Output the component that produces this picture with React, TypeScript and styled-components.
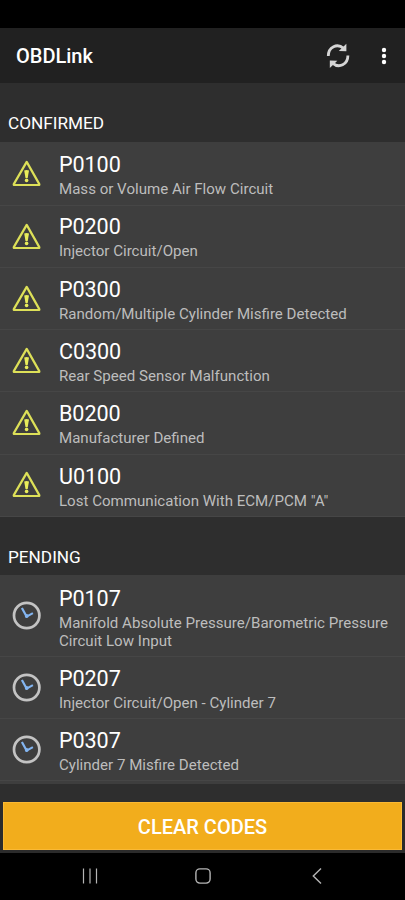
import React from "react";
import styled, { createGlobalStyle } from "styled-components";

const GlobalStyle = createGlobalStyle`
  * { box-sizing: border-box; }
  body { margin: 0; background: #000; font-family: Roboto, sans-serif; }
`;

const Screen = styled.div`
  width: 405px;
  height: 900px;
  padding-top: 28px;
  display: flex;
  flex-direction: column;
  background: #000;
  color: #fff;
  overflow: hidden;
`;

const AppBar = styled.header`
  flex: none;
  height: 55px;
  padding: 0 6px 0 16px;
  display: flex;
  align-items: center;
  background: #212121;
`;

const AppTitle = styled.h1`
  margin: 0;
  flex: 1;
  font-size: 20px;
  line-height: 24px;
  font-weight: 500;
  padding-top: 1px;
`;

const IconButton = styled.button<{ $width: number }>`
  width: ${(p) => p.$width}px;
  height: 40px;
  padding: 0;
  border: 0;
  background: none;
  display: grid;
  place-items: center;
`;

const Content = styled.main`
  flex: none;
  height: 719px;
  background: #2e2e2e;
`;

const SectionHeader = styled.h2<{ $height: number; $bottom: number }>`
  margin: 0;
  height: ${(p) => p.$height}px;
  padding: 0 8px ${(p) => p.$bottom}px;
  display: flex;
  align-items: flex-end;
  font-size: 17.2px;
  line-height: 21px;
  font-weight: 400;
`;

const CodeList = styled.ul<{ $height: number }>`
  list-style: none;
  margin: 0;
  padding: 0;
  height: ${(p) => p.$height}px;
  background: #3e3e3e;
`;

const CodeRow = styled.li<{ $height: number }>`
  height: ${(p) => p.$height}px;
  padding: 0 12px;
  display: flex;
  align-items: center;
  border-bottom: 1px solid #464646;
`;

const IconSlot = styled.span`
  width: 29px;
  height: 30px;
  margin-right: 18px;
  flex: none;
`;

const RowText = styled.div<{ $inset: number }>`
  flex: 1;
  padding-top: ${(p) => p.$inset}px;
  white-space: pre-line;
`;

const Code = styled.div`
  font-size: 21.6px;
  line-height: 26px;
  letter-spacing: -0.1px;
`;

const Description = styled.div`
  font-size: 15.08px;
  line-height: 18px;
  color: #bdbdbd;
  padding-top: 2px;
`;

const Footer = styled.div`
  flex: none;
  height: 51px;
  padding: 0 3px 3px;
  background: #2b2b2b;
`;

const ClearButton = styled.button`
  display: block;
  width: 100%;
  height: 48px;
  padding: 2px 0 0;
  border: 1px solid #fbb934;
  background: #f2ad1c;
  color: #fff;
  font: 500 20px/24px Roboto, sans-serif;
`;

const NavBar = styled.nav`
  flex: 1;
  display: grid;
  grid-template-columns: 113px 1fr 113px;
  padding: 0 32px 2px 33px;
  align-items: center;
  justify-items: center;
`;

const WarningIcon = () => (
  <svg width="29" height="30" viewBox="0 0 29 30" fill="none">
    <path d="M14.7 2.9 27.3 25.1Q27.6 26 26.7 26H2.4Q1.5 26 1.8 25.1Z" stroke="#dde058" strokeWidth="2.2" strokeLinejoin="round" />
    <path d="M12.2 11.6Q14.6 10.2 17 11.6L15.7 19H13.5Z" fill="#e8ec5a" />
    <circle cx="14.6" cy="21.4" r="1.8" fill="#e8ec5a" />
  </svg>
);

const ClockIcon = () => (
  <svg width="29" height="30" viewBox="0 0 29 30" fill="none">
    <circle cx="14.7" cy="15.5" r="12.7" stroke="#c3c3c3" strokeWidth="2.7" />
    <path d="m9.9 8 4.7 8.6 6.3-3.5" stroke="#83b5f1" strokeWidth="2.2" />
    <circle cx="14.7" cy="16" r="1.9" fill="#83b5f1" />
  </svg>
);

const RefreshIcon = () => (
  <svg width="24" height="26" viewBox="0 0 24 26" fill="none">
    <path d="M2.3 13C2.3 4 11.2-.3 17.6 5.4" stroke="#d5d5d5" strokeWidth="2.8" />
    <path d="M20.4.8V8.3L12.8 8Z" fill="#d5d5d5" />
    <path d="M21.9 12.5c0 9-8.9 13.3-15.3 7.6" stroke="#d5d5d5" strokeWidth="2.8" />
    <path d="M3.8 24.9V17.4L11.4 17.7Z" fill="#d5d5d5" />
  </svg>
);

const MoreIcon = () => (
  <svg width="6" height="18" viewBox="0 0 6 18" fill="#fff">
    <circle cx="3" cy="3" r="2.2" />
    <circle cx="3" cy="9" r="2.2" />
    <circle cx="3" cy="15" r="2.2" />
  </svg>
);

type Trouble = { code: string; text: string; height: number; inset?: number };

const confirmed: Trouble[] = [
  { code: "P0100", text: "Mass or Volume Air Flow Circuit", height: 64 },
  { code: "P0200", text: "Injector Circuit/Open", height: 62, inset: 1 },
  { code: "P0300", text: "Random/Multiple Cylinder Misfire Detected", height: 62 },
  { code: "C0300", text: "Rear Speed Sensor Malfunction", height: 62.3 },
  { code: "B0200", text: "Manufacturer Defined", height: 62.3 },
  { code: "U0100", text: 'Lost Communication With ECM/PCM "A"', height: 62.4, inset: 3 },
];

const pending: Trouble[] = [
  { code: "P0107", text: "Manifold Absolute Pressure/Barometric Pressure\nCircuit Low Input", height: 81.5, inset: 5 },
  { code: "P0207", text: "Injector Circuit/Open - Cylinder 7", height: 62.3, inset: 3 },
  { code: "P0307", text: "Cylinder 7 Misfire Detected", height: 62.3, inset: 3 },
];

const Codes = ({ items, height, icon }: { items: Trouble[]; height: number; icon: React.ReactNode }) => (
  <CodeList $height={height}>
    {items.map((item) => (
      <CodeRow key={item.code} $height={item.height}>
        <IconSlot>{icon}</IconSlot>
        <RowText $inset={item.inset ?? 2}>
          <Code>{item.code}</Code>
          <Description>{item.text}</Description>
        </RowText>
      </CodeRow>
    ))}
  </CodeList>
);

export default function App() {
  return (
    <>
      <GlobalStyle />
      <Screen>
        <AppBar>
          <AppTitle>OBDLink</AppTitle>
          <IconButton $width={60} aria-label="Refresh"><RefreshIcon /></IconButton>
          <IconButton $width={31} aria-label="More options"><MoreIcon /></IconButton>
        </AppBar>
        <Content>
          <SectionHeader $height={59} $bottom={8}>CONFIRMED</SectionHeader>
          <Codes items={confirmed} height={375} icon={<WarningIcon />} />
          <SectionHeader $height={58} $bottom={7}>PENDING</SectionHeader>
          <Codes items={pending} height={209} icon={<ClockIcon />} />
        </Content>
        <Footer>
          <ClearButton>CLEAR CODES</ClearButton>
        </Footer>
        <NavBar>
          <svg width="16" height="16" viewBox="0 0 16 16" stroke="#b5b5b5" strokeWidth="1.2"><path d="M1.5 .5v15M8 .5v15M14.5 .5v15" /></svg>
          <svg width="16" height="16" viewBox="0 0 16 16" fill="none" stroke="#b5b5b5" strokeWidth="1.4"><rect x=".9" y=".9" width="14.2" height="14.2" rx="4" /></svg>
          <svg width="10" height="16" viewBox="0 0 10 16" fill="none" stroke="#b5b5b5" strokeWidth="1.4"><path d="M9 .6 1.3 8 9 15.4" /></svg>
        </NavBar>
      </Screen>
    </>
  );
}
